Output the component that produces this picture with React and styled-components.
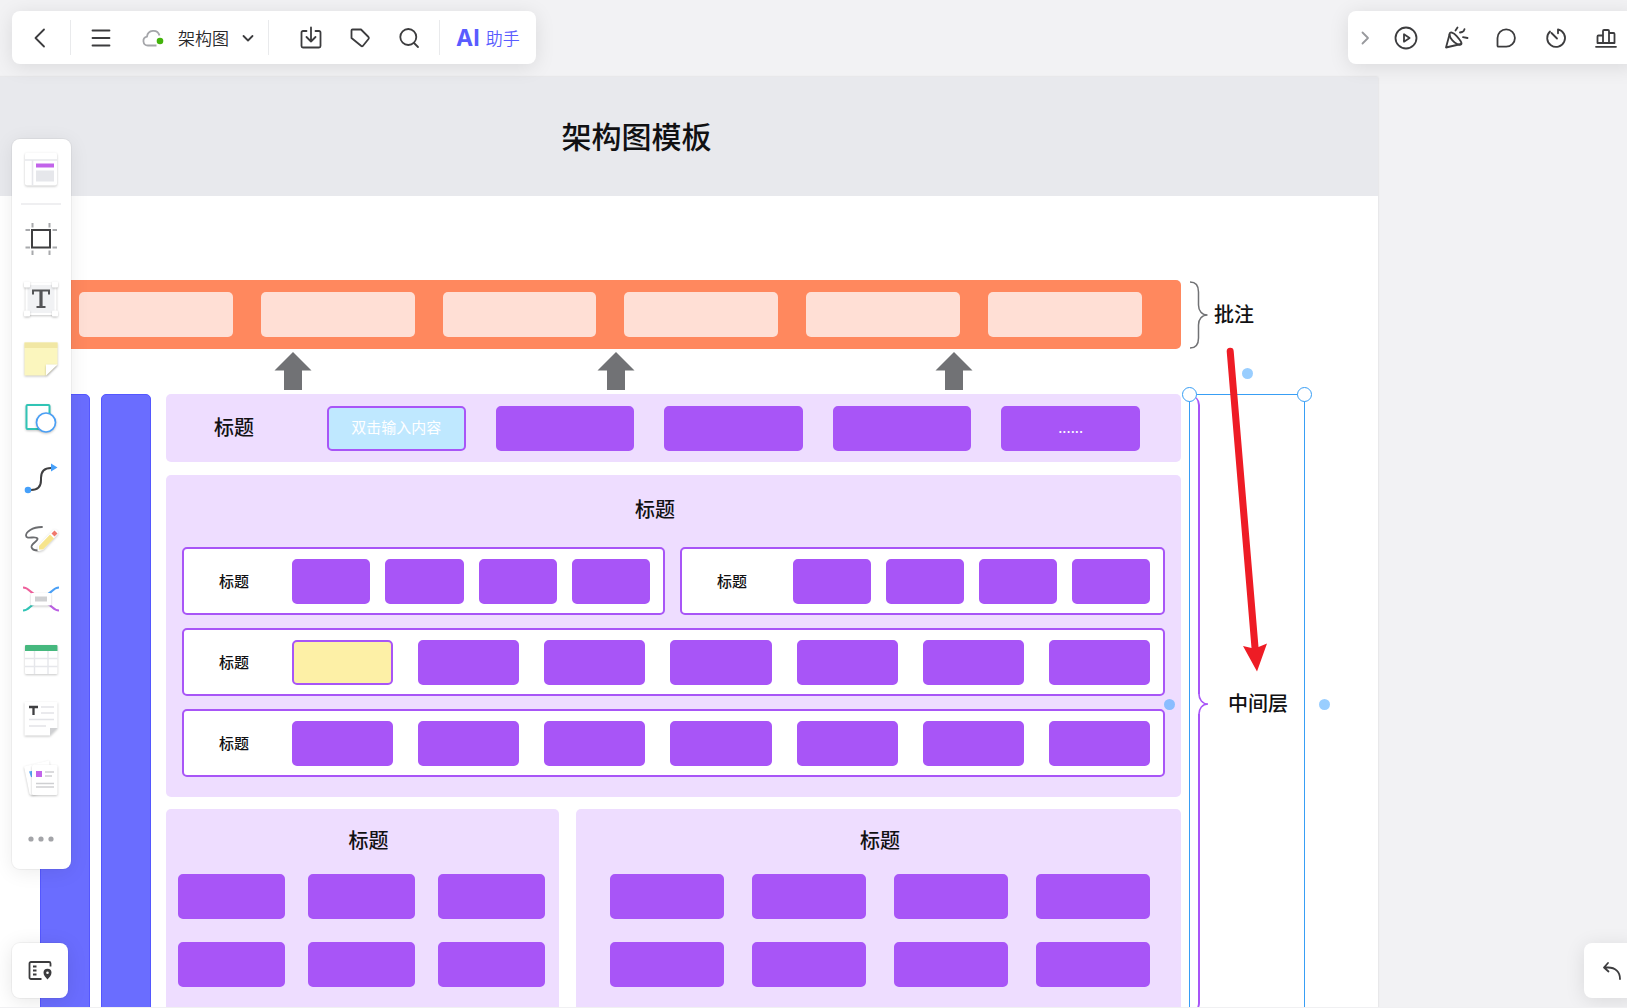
import React from "react";
import styled, { createGlobalStyle } from "styled-components";

const PURPLE = "#a855f7";

const leftTools = [
  { name: "画框", icon: "frame" },
  { name: "文本", icon: "text" },
  { name: "便签", icon: "sticky" },
  { name: "形状", icon: "shapes" },
  { name: "连线", icon: "connector" },
  { name: "画笔", icon: "pencil" },
  { name: "思维导图", icon: "mindmap" },
  { name: "表格", icon: "table" },
  { name: "文档", icon: "doc" },
  { name: "卡片", icon: "cards" },
  { name: "更多", icon: "more" },
];

// Line icons of the floating bars, all on a 24px grid
const lineIcons = {
  back: <path d="M15 3.500 6.500 12l8.500 8.500" />,
  menu: <path d="M3.500 4.500h17M3.500 12h17M3.500 19.500h17" />,
  down: <path d="m7.500 10 4.500 4.500 4.500-4.500" />,
  right: <path d="m9.500 6.500 5.500 5.500-5.500 5.500" />,
  import: <path d="M7.500 5H4a1.500 1.500 0 0 0-1.500 1.500V20A1.500 1.500 0 0 0 4 21.500h16a1.500 1.500 0 0 0 1.500-1.500V6.500A1.500 1.500 0 0 0 20 5h-3.500M12 1.500v14m-4.500-4.500 4.500 4.500 4.500-4.500" />,
  tag: <path d="M3.500 4.500A1 1 0 0 1 4.500 3.500H13l7.500 7.500a1.500 1.500 0 0 1 0 2L15 19.800a1.500 1.500 0 0 1-2 0L3.500 12Z" />,
  search: <><circle cx="11.300" cy="11" r="8" /><path d="m17 17 4 4" /></>,
  play: <><circle cx="12" cy="12" r="10.500" /><path d="M10 8.300v7.400l5.600-3.700Z" /></>,
  party: (
    <>
      <path d="M5.500 8.500 2 21.500l15-3.500" />
      <path d="M5.500 8.500c0-3.500 4-2 7.200 1.600s6 7.400 4.300 8.400-5.800-1-8.600-4.200S5.500 10 5.500 8.500Z" />
      <path d="m11.500 4.500 2-3M16 6.500l2.200-.5 1.500-1 .8-1.900M19 11.200l4.500.8" />
    </>
  ),
  bubble: <path d="M12.200 3.300a8.700 8.700 0 1 1 0 17.400H4.500a1 1 0 0 1-1-1V12a8.700 8.700 0 0 1 8.700-8.700Z" />,
  timer: <path d="M14 3.300v4M14 3.300a8.900 8.900 0 1 1-8 2.200M7.500 7l4.500 4.500 1 1" />,
  chart: (
    <path d="M3.500 17V10.500a1 1 0 0 1 1-1H9V17ZM9 17V5a1 1 0 0 1 1-1h4a1 1 0 0 1 1 1v12ZM15 17V7h4.500a1 1 0 0 1 1 1v9ZM2 20.800h20" />
  ),
  undo: <path d="M8 4 4 8.500 8.500 12.500M4 8.500h4C15.500 8.500 20 13 20 20" />,
};

const Icon = ({ name, size = 24, color = "#3c3c3e" }) => (
  <svg
    width={size}
    height={size}
    viewBox="0 0 24 24"
    fill="none"
    stroke={color}
    strokeWidth="1.800"
    strokeLinejoin="round"
    strokeLinecap="round"
    aria-hidden="true"
  >
    {lineIcons[name]}
  </svg>
);

const CloudIcon = () => (
  <svg width="24" height="24" viewBox="0 0 24 24" fill="none" aria-hidden="true">
    <path
      d="M15.500 19.500H7a4.500 4.500 0 0 1-1-8.900A6.400 6.400 0 0 1 18.500 9.500"
      stroke="#a5a6aa"
      strokeWidth="1.800"
    />
    <circle cx="19" cy="15" r="3.300" fill="#43b30b" />
  </svg>
);

const MapIcon = () => (
  <svg width="24" height="24" viewBox="0 0 24 24" fill="none" aria-hidden="true">
    <path
      d="M13.500 20H3a1.500 1.500 0 0 1-1.500-1.500V4.500A1.500 1.500 0 0 1 3 3h18a1.500 1.500 0 0 1 1.500 1.500v3"
      stroke="#3c3c3e"
      strokeWidth="1.800"
    />
    <path d="M5 7.500h3.500M5 11.500h3.500M5 15.500h3.500" stroke="#3c3c3e" strokeWidth="1.800" />
    <path
      d="M19.500 9.800a4 4 0 0 1 4 4c0 2.700-2.500 5-4 6.600-1.500-1.600-4-3.900-4-6.600a4 4 0 0 1 4-4Zm0 2.700a1.300 1.300 0 1 0 0 2.600 1.300 1.300 0 0 0 0-2.600Z"
      fill="#3c3c3e"
      fillRule="evenodd"
    />
  </svg>
);

// Coloured drawings of the side bar, on a 40px grid
const toolIcons = {
  template: (
    <>
      <rect className="sheet" x="4" y="3.500" width="32" height="33" rx="2" fill="#fff" />
      <path d="M4 11h32M11.500 11v25.500" stroke="#e6e7eb" strokeWidth="1.600" />
      <rect x="15" y="14.500" width="18" height="4" fill="#c264ea" />
      <rect x="15" y="21.500" width="18" height="11" fill="#e6e7eb" />
    </>
  ),
  frame: (
    <>
      <path
        d="M11.500 4v4.500M28.500 4v4.500M11.500 31.500V36M28.500 31.500V36M4.500 11H9M4.500 28.500H9M31.500 11H36M31.500 28.500H36"
        stroke="#a8a9ac"
        strokeWidth="2"
      />
      <rect x="11" y="11" width="18" height="17.500" fill="#fff" stroke="#3f3f41" strokeWidth="2" />
    </>
  ),
  text: (
    <>
      <rect className="sheet" x="5.500" y="5" width="29" height="30" fill="#f1f2f4" stroke="#fff" strokeWidth="2" />
      <g className="sheet" fill="#fff">
        <rect x="3" y="2.500" width="6" height="6" rx="1" />
        <rect x="31" y="2.500" width="6" height="6" rx="1" />
        <rect x="3" y="31.500" width="6" height="6" rx="1" />
        <rect x="31" y="31.500" width="6" height="6" rx="1" />
      </g>
      <path
        d="M12 15.500v-4h16v4M15.500 28h9"
        fill="none"
        stroke="#545557"
        strokeWidth="2"
      />
      <path d="M20 11v17" stroke="#545557" strokeWidth="3.200" />
    </>
  ),
  sticky: (
    <>
      <path className="sheet" d="M3.500 3.500h33v22L25.500 36.500h-22Z" fill="#fbf6be" />
      <path d="M3.500 3.500h33v5.500h-33Z" fill="#f1e7a4" />
      <path className="sheet" d="M25 36.500v-11h11.500Z" fill="#fff" />
    </>
  ),
  shapes: (
    <>
      <rect className="sheet" x="5.500" y="6" width="23" height="24" rx="1" fill="#fff" stroke="#31c4b5" strokeWidth="2" />
      <circle className="sheet" cx="25" cy="23.500" r="9.500" fill="#fff" stroke="#4a9ff5" strokeWidth="1.700" />
    </>
  ),
  connector: (
    <>
      <path
        d="M7 31h3c6 0 10-3 10-10v-2c0-6 3-10 10-10"
        fill="none"
        stroke="#3f3f41"
        strokeWidth="2"
      />
      <circle cx="7" cy="31" r="3.300" fill="#46a0fa" />
      <path d="M30 4.500 36.500 8.500 30 12.500Z" fill="#46a0fa" />
    </>
  ),
  pencil: (
    <>
      <path
        d="M21 8C11 8 5 13 5 16.500c0 4.500 10 0 11.500 3 1 2.500-6.500 5-6 8.500.5 3 3 3.500 6.500 3.500"
        fill="none"
        stroke="#6b6c6f"
        strokeWidth="1.800"
        strokeLinecap="round"
      />
      <path className="sheet" d="m16.500 27 15.500-16q2-1.500 4 .5t.5 4L22 31l-5.500 1.500Z" fill="#fff" />
      <path d="m18 27 11-11.500 4 4L22 30.500h-4Z" fill="#f6e48c" />
      <path d="m30.500 14.500 3-3 3 3-3 3Z" fill="#f0786c" />
    </>
  ),
  mindmap: (
    <>
      <g fill="none" strokeWidth="2">
        <path d="M2 8.500c7 0 7 7 14 7" stroke="#ee5f9b" />
        <path d="M38 8.500c-7 0-7 7-14 7" stroke="#4a9ff5" />
        <path d="M2 31.500c7 0 7-7 14-7" stroke="#31c4b5" />
        <path d="M38 31.500c-7 0-7-7-14-7" stroke="#bb5fe3" />
      </g>
      <rect className="sheet" x="10" y="14" width="20" height="12.500" rx="1" fill="#fff" />
      <rect x="14" y="17.500" width="12" height="5" fill="#cfd0d2" />
    </>
  ),
  table: (
    <>
      <rect className="sheet" x="4" y="6" width="32.500" height="29" rx="1" fill="#fff" />
      <path d="M4 19.500h32.500M4 27.500h32.500M13.500 11v24M27 11v24" stroke="#e6e7eb" strokeWidth="1.400" />
      <path d="M4 7q0-1 1-1h30.500q1 0 1 1v5H4Z" fill="#46b87e" />
    </>
  ),
  doc: (
    <>
      <path className="sheet" d="M3.500 3h33v26L29 36.500H3.500Z" fill="#fff" />
      <path d="M8 8h9M12.500 8v8" stroke="#3f3f41" strokeWidth="2.300" />
      <path d="M20 8h13M20 14h13M8 20.500h25M8 27h17" stroke="#e3e4e8" strokeWidth="1.600" />
      <path d="M29 36.500V29h7.500Z" fill="#cfd0d2" />
    </>
  ),
  cards: (
    <>
      <path className="sheet" d="m3 7.500 25-6 4 28-21 6.500q-2 0-2.500-1.500Z" fill="#fff" />
      <path d="m8 12.500 5-1v7l-3-.5Z" fill="#58a8f7" />
      <rect className="sheet" x="11" y="6" width="25.500" height="30" rx="1.500" fill="#fff" />
      <rect x="15" y="12" width="6" height="6" fill="#c264ea" />
      <path d="M24 13h9M24 17h7M15 24.500h18M15 28h18" stroke="#cfd0d2" strokeWidth="1.600" />
    </>
  ),
  more: (
    <g fill="#a3a4a8">
      <circle cx="10" cy="20" r="2.600" />
      <circle cx="20" cy="20" r="2.600" />
      <circle cx="30" cy="20" r="2.600" />
    </g>
  ),
};

const ToolIcon = ({ name }) => (
  <ToolSvg width="40" height="40" viewBox="0 0 40 40" aria-hidden="true">
    {toolIcons[name]}
  </ToolSvg>
);

const UpArrow = () => (
  <svg width="38" height="38" viewBox="0 0 38 38" aria-hidden="true">
    <path d="M19 0 37.500 18.500H28V38H10V18.500H.5Z" fill="#717275" />
  </svg>
);

const Cells = ({ count, first }) =>
  Array.from({ length: count }, (_, i) => <Cell key={i} $tone={i === 0 ? first : undefined} />);

const TopBar = () => (
  <TopLeftBar>
    <BarButton $width={58} aria-label="返回"><Icon name="back" /></BarButton>
    <Divider />
    <BarButton $width={60} aria-label="菜单"><Icon name="menu" /></BarButton>
    <BarButton $width={43} aria-label="已保存"><CloudIcon /></BarButton>
    <NameButton>
      架构图
      <Icon name="down" />
    </NameButton>
    <Divider />
    <IconGroup>
      <BarButton $width={49} aria-label="导入"><Icon name="import" /></BarButton>
      <BarButton $width={49} aria-label="标签"><Icon name="tag" /></BarButton>
      <BarButton $width={49} aria-label="搜索"><Icon name="search" /></BarButton>
    </IconGroup>
    <Divider />
    <AiButton>
      <strong>AI</strong>
      助手
    </AiButton>
  </TopLeftBar>
);

const ActionBar = () => (
  <TopRightBar>
    <BarButton $width={33} aria-label="收起"><Icon name="right" color="#98999d" /></BarButton>
    <BarButton $width={50} aria-label="演示"><Icon name="play" /></BarButton>
    <BarButton $width={50} aria-label="庆祝"><Icon name="party" /></BarButton>
    <BarButton $width={50} aria-label="评论"><Icon name="bubble" /></BarButton>
    <BarButton $width={50} aria-label="计时"><Icon name="timer" /></BarButton>
    <BarButton $width={50} aria-label="投票"><Icon name="chart" /></BarButton>
  </TopRightBar>
);

const SideBar = () => (
  <ToolPanel>
    <ToolButton aria-label="模板"><ToolIcon name="template" /></ToolButton>
    <ToolDivider />
    {leftTools.map((tool) => (
      <ToolButton key={tool.icon} aria-label={tool.name}>
        <ToolIcon name={tool.icon} />
      </ToolButton>
    ))}
  </ToolPanel>
);

const Annotation = () => (
  <Selection>
    <BraceColumn>
      <BraceEnd />
      <svg width="19" height="20" viewBox="0 0 19 20" fill="none" stroke={PURPLE} strokeWidth="1.600" aria-hidden="true">
        <path d="M9 0C9 5 12 10 18 10 12 10 9 15 9 20" />
      </svg>
      <BraceEnd $bottom />
    </BraceColumn>
    <NoteText>中间层</NoteText>
    <Handle $side="left" />
    <Handle $side="right" />
    <Dot $side="top" />
    <Dot $side="left" />
    <Dot $side="right" />
    <RedArrow width="46" height="324" viewBox="0 0 46 324" aria-hidden="true">
      <path
        d="M4.700 2.500a3.500 3.500 0 0 1 7-.3L36.500 298 45 294.500 35 322.500 21 297 29.500 299Z"
        fill="#ee1c25"
      />
    </RedArrow>
  </Selection>
);

const App = () => {
  return (
    <Page>
      <GlobalStyle />
      <Board>
        <BoardHeader>
          <h1>架构图模板</h1>
        </BoardHeader>
        <Diagram>
          <OrangeBar>
            {Array.from({ length: 6 }, (_, i) => <PeachCell key={i} />)}
          </OrangeBar>
          <Note>
            <svg width="19" height="68" viewBox="0 0 19 68" fill="none" stroke="#717275" strokeWidth="1.500" aria-hidden="true">
              <path d="M1 1C7 1 9.500 5 9.500 11V24C9.500 30 13 34 18.500 34 13 34 9.500 38 9.500 44V57C9.500 63 7 67 1 67" />
            </svg>
            <NoteText>批注</NoteText>
          </Note>
          <ArrowRow>
            <UpArrow />
            <UpArrow />
            <UpArrow />
          </ArrowRow>
          <Layers>
            <BlueColumn />
            <BlueColumn />
            <Panels>
              <Strip>
                <StripTitle>标题</StripTitle>
                <Cell $tone="blue">双击输入内容</Cell>
                <Cells count={3} />
                <Cell>......</Cell>
              </Strip>
              <Panel>
                <PanelTitle $height={72} $right={37}>标题</PanelTitle>
                <GroupGrid>
                  <Group $gap={15}>
                    <GroupTitle>标题</GroupTitle>
                    <Cells count={4} />
                  </Group>
                  <Group $gap={15} $lead={11}>
                    <GroupTitle>标题</GroupTitle>
                    <Cells count={4} />
                  </Group>
                  <Group $wide $gap={25}>
                    <GroupTitle>标题</GroupTitle>
                    <Cells count={7} first="yellow" />
                  </Group>
                  <Group $wide $gap={25}>
                    <GroupTitle>标题</GroupTitle>
                    <Cells count={7} />
                  </Group>
                </GroupGrid>
              </Panel>
              <BottomPanels>
                <Panel $left={12} $rightPad={14} $bottom={27}>
                  <PanelTitle $height={65} $left={14}>标题</PanelTitle>
                  <CellGrid $columns={3} $gap={23}>
                    <Cells count={6} />
                  </CellGrid>
                </Panel>
                <Panel $left={34} $rightPad={31} $bottom={27}>
                  <PanelTitle $height={65}>标题</PanelTitle>
                  <CellGrid $columns={4} $gap={28}>
                    <Cells count={8} />
                  </CellGrid>
                </Panel>
              </BottomPanels>
            </Panels>
          </Layers>
          <Annotation />
        </Diagram>
      </Board>
      <TopBar />
      <ActionBar />
      <SideBar />
      <MapButton aria-label="导航"><MapIcon /></MapButton>
      <UndoBar>
        <BarButton $width={55} aria-label="撤销"><Icon name="undo" /></BarButton>
      </UndoBar>
    </Page>
  );
};

export default App;

const GlobalStyle = createGlobalStyle`
  * {
    box-sizing: border-box;
  }

  body {
    margin: 0;
    font-family: "Noto Sans CJK SC", sans-serif;
    color: #111113;
  }

  button {
    font-family: inherit;
    padding: 0;
    border: none;
    background: none;
    cursor: pointer;
  }

  svg {
    display: block;
    flex-shrink: 0;
    overflow: visible;
  }
`;

const Page = styled.div`
  position: relative;
  height: 100vh;
  padding-top: 77px;
  overflow: hidden;
  border-bottom: 1px solid #f0f0f2;
  background-color: #f2f2f4;
`;

const Board = styled.main`
  margin: 0 249px 0 -105px;
  background-color: #fff;
  box-shadow: 0 0 2px rgba(0, 0, 0, 0.12);
`;

const BoardHeader = styled.header`
  display: flex;
  align-items: center;
  justify-content: center;
  height: 119px;
  padding-bottom: 4px;
  background-color: #e8e9ed;

  h1 {
    margin: 0;
    font-size: 30px;
    font-weight: 500;
    line-height: 44px;
  }
`;

const Diagram = styled.div`
  display: grid;
  grid-template-columns: minmax(0, 1fr) 197px;
  padding: 84px 0 40px 145px;
`;

const OrangeBar = styled.div`
  display: flex;
  gap: 28px;
  padding: 12px 39px;
  border-radius: 5px;
  background-color: #ff885e;
`;

const PeachCell = styled.div`
  flex: 1;
  height: 45px;
  border-radius: 5px;
  background-color: #ffdfd5;
`;

const Note = styled.div`
  display: flex;
  align-items: center;
  gap: 6px;
  padding-left: 8px;
`;

const NoteText = styled.span`
  padding-bottom: 2px;
  font-size: 20px;
  font-weight: 500;
  line-height: 28px;
  white-space: nowrap;
`;

const ArrowRow = styled.div`
  grid-column: 1 / -1;
  display: grid;
  grid-template-columns: 323fr 338fr 38px;
  height: 45px;
  padding: 3px 405px 0 234px;
`;

const Layers = styled.div`
  display: flex;
  gap: 11px;
`;

const BlueColumn = styled.div`
  width: 50px;
  border: 1px solid #5457ff;
  border-radius: 5px;
  background-color: #6a6dff;
`;

const Panels = styled.div`
  flex: 1;
  display: flex;
  flex-direction: column;
  gap: 12px;
  margin-left: 4px;
`;

const Strip = styled.section`
  display: flex;
  align-items: center;
  gap: 30px;
  height: 68px;
  margin-bottom: 1px;
  padding-right: 41px;
  border-radius: 5px;
  background-color: #eeddff;
`;

const StripTitle = styled.h2`
  width: 131px;
  margin: 0;
  padding: 0 0 2px 5px;
  font-size: 20px;
  font-weight: 500;
  line-height: 28px;
  text-align: center;
`;

const tones = {
  blue: "#bfe8ff",
  yellow: "#fdf0a6",
};

const Cell = styled.div`
  flex: 1;
  display: flex;
  align-items: center;
  justify-content: center;
  height: 45px;
  padding-bottom: 2px;
  border: 2px solid ${PURPLE};
  border-radius: 5px;
  background-color: ${({ $tone }) => tones[$tone] || PURPLE};
  color: #fff;
  font-size: 15px;
  line-height: 20px;
  white-space: nowrap;
`;

const Panel = styled.section`
  padding: 0 ${({ $rightPad = 16 }) => $rightPad}px ${({ $bottom = 20 }) => $bottom}px ${({ $left = 16 }) => $left}px;
  border-radius: 5px;
  background-color: #eeddff;
`;

const PanelTitle = styled.h2`
  display: flex;
  align-items: center;
  justify-content: center;
  height: ${({ $height }) => $height}px;
  margin: 0;
  padding: 0 ${({ $right = 0 }) => $right}px 4px ${({ $left = 0 }) => $left}px;
  font-size: 20px;
  font-weight: 500;
  line-height: 28px;
`;

const GroupGrid = styled.div`
  display: grid;
  grid-template-columns: 483fr 485fr;
  gap: 13px 15px;
`;

const Group = styled.div`
  display: flex;
  align-items: center;
  gap: ${({ $gap }) => $gap}px;
  grid-column: ${({ $wide }) => ($wide ? "1 / -1" : "auto")};
  height: 68px;
  padding-right: 13px;
  border: 2px solid ${PURPLE};
  border-radius: 5px;
  background-color: #fff;

  h3 {
    margin-right: ${({ $gap, $lead = 8 }) => $lead - $gap}px;
  }
`;

const GroupTitle = styled.h3`
  width: 100px;
  margin: 0;
  font-size: 15px;
  font-weight: 500;
  line-height: 20px;
  text-align: center;
`;

const BottomPanels = styled.div`
  display: grid;
  grid-template-columns: 393fr 605fr;
  gap: 17px;
`;

const CellGrid = styled.div`
  display: grid;
  grid-template-columns: repeat(${({ $columns }) => $columns}, 1fr);
  gap: 23px ${({ $gap }) => $gap}px;
`;

const Selection = styled.div`
  position: relative;
  display: flex;
  align-items: center;
  gap: 19px;
  width: 116px;
  margin-left: 8px;
  border: 1px solid #389ef5;
`;

const BraceColumn = styled.div`
  align-self: stretch;
  display: flex;
  flex-direction: column;
  width: 19px;
`;

const BraceEnd = styled.div`
  flex: 1;
  width: 10px;
  border-right: 2px solid ${PURPLE};
  border-radius: ${({ $bottom }) => ($bottom ? "0 0 10px 0" : "0 10px 0 0")};
`;

const Handle = styled.span`
  position: absolute;
  top: -8px;
  ${({ $side }) => $side}: -8px;
  width: 15px;
  height: 15px;
  border: 1px solid #389ef5;
  border-radius: 50%;
  background-color: #fff;
`;

const dotPlaces = {
  top: "top: -27px; left: calc(50% - 5px);",
  left: "top: calc(50% - 5px); left: -26px;",
  right: "top: calc(50% - 5px); right: -26px;",
};

const Dot = styled.span`
  position: absolute;
  ${({ $side }) => dotPlaces[$side]}
  width: 11px;
  height: 11px;
  border-radius: 50%;
  background-color: ${({ $side }) => ($side === "left" ? "#8abdff" : "#99ceff")};
`;

const RedArrow = styled.svg`
  position: absolute;
  top: -46px;
  left: 32px;
`;

const FloatingBar = styled.div`
  position: absolute;
  display: flex;
  align-items: center;
  border-radius: 8px;
  background-color: #fff;
  box-shadow: 0 3px 20px rgba(0, 0, 0, 0.1);
`;

const TopLeftBar = styled(FloatingBar).attrs({ as: "nav" })`
  top: 11px;
  left: 12px;
  height: 53px;
`;

const TopRightBar = styled(FloatingBar)`
  top: 11px;
  right: -8px;
  height: 53px;
  padding-right: 4px;
  border-radius: 8px 0 0 8px;
`;

const UndoBar = styled(FloatingBar)`
  right: -12px;
  bottom: 9px;
  height: 55px;
`;

const IconGroup = styled.div`
  display: flex;
  padding: 0 6px 0 17px;
`;

const BarButton = styled.button`
  display: flex;
  align-items: center;
  justify-content: center;
  width: ${({ $width }) => $width}px;
  height: 40px;
`;

const Divider = styled.span`
  width: 1px;
  height: 35px;
  background-color: #e9eaec;
`;

const NameButton = styled.button`
  display: flex;
  align-items: center;
  gap: 7px;
  width: 94px;
  padding-left: 4px;
  color: #2a2a2c;
  font-size: 17px;
  font-weight: 350;
  line-height: 24px;
  white-space: nowrap;
`;

const AiButton = styled.button`
  display: flex;
  align-items: center;
  gap: 6px;
  padding: 0 16px;
  color: #5a5cff;
  font-size: 17px;
  font-weight: 350;
  line-height: 24px;

  strong {
    font-family: Inter, sans-serif;
    font-size: 23px;
    font-weight: 700;
  }
`;

const ToolPanel = styled(FloatingBar).attrs({ as: "aside" })`
  top: 139px;
  left: 12px;
  flex-direction: column;
  width: 59px;
  padding-right: 2px;
  box-shadow: 0 0 0 1px rgba(0, 0, 0, 0.04), 0 3px 20px rgba(0, 0, 0, 0.08);
`;

const ToolButton = styled.button`
  display: flex;
  align-items: center;
  justify-content: center;
  width: 100%;
  height: 60px;
`;

const ToolDivider = styled.span`
  width: 40px;
  height: 2px;
  margin: 4px 0;
  background-color: #efeff1;
`;

const ToolSvg = styled.svg`
  .sheet {
    filter: drop-shadow(0 1px 1px rgba(0, 0, 0, 0.22));
  }
`;

const MapButton = styled.button`
  position: absolute;
  left: 12px;
  bottom: 9px;
  display: flex;
  align-items: center;
  justify-content: center;
  width: 56px;
  height: 55px;

  && {
    border-radius: 8px;
    background-color: #fff;
    box-shadow: 0 0 0 1px rgba(0, 0, 0, 0.04), 0 3px 20px rgba(0, 0, 0, 0.1);
  }
`;
